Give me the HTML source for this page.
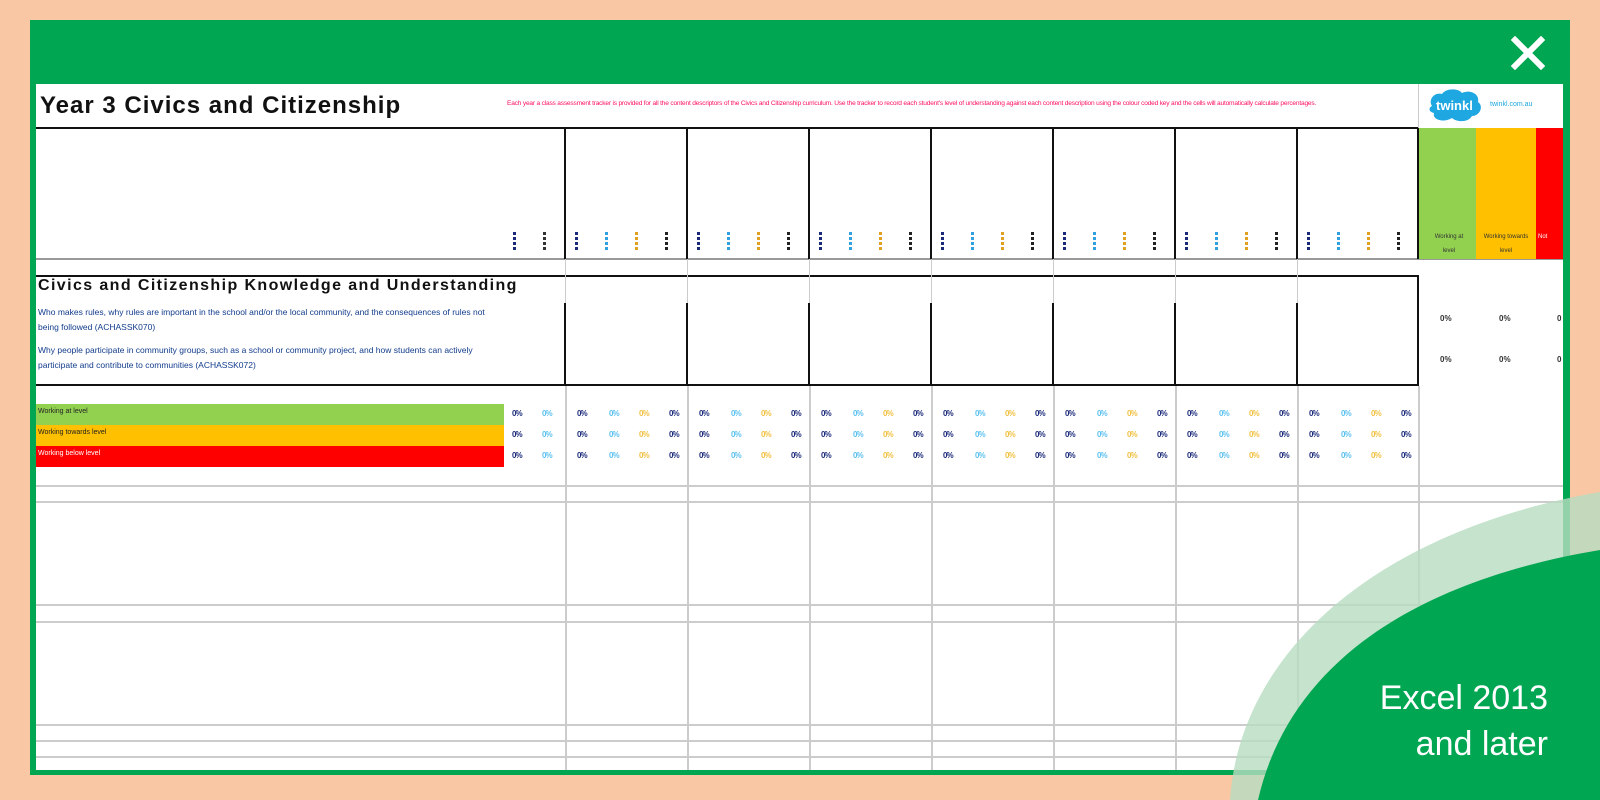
<!DOCTYPE html>
<html><head><meta charset="utf-8"><style>
*{margin:0;padding:0;box-sizing:border-box}
body{width:1600px;height:800px;background:#f9c7a3;position:relative;overflow:hidden;font-family:"Liberation Sans",sans-serif}
.a{position:absolute}
#frame{left:30px;top:20px;width:1540px;height:755px;background:#00a651}
#sheet{left:36px;top:84px;width:1527px;height:686px;background:#fff}
.h{position:absolute;height:1px}
.v{position:absolute;width:1px}
.m{position:absolute;font-size:8px;font-weight:bold;letter-spacing:-1px}
</style></head><body>
<div class="a" id="frame"></div>
<div class="a" id="sheet"></div>
<svg class="a" style="left:1511px;top:36px" width="34" height="34" viewBox="0 0 34 34"><path d="M4 4L30 30M30 4L4 30" stroke="#fff" stroke-width="6" stroke-linecap="square"/></svg>

<div class="a" style="left:40px;top:92px;font-size:24px;font-weight:bold;color:#111;letter-spacing:1px">Year 3 Civics and Citizenship</div>
<div class="a" style="left:507px;top:100px;font-size:6.6px;color:#ff1060;white-space:nowrap;letter-spacing:-0.2px">Each year a class assessment tracker is provided for all the content descriptors of the Civics and Citizenship curriculum. Use the tracker to record each student's level of understanding against each content description using the colour coded key and the cells will automatically calculate percentages.</div>
<svg class="a" style="left:1426px;top:86px" width="60" height="40" viewBox="0 0 60 40"><path d="M6 20C2 14 8 6 16 8C20 2 32 2 36 7C44 3 54 8 52 16C58 20 54 30 46 30C42 37 30 36 26 32C18 37 6 34 8 27C3 26 2 22 6 20Z" fill="#1ea7e1"/><text x="10" y="24" font-family="Liberation Sans" font-size="13" font-weight="bold" fill="#fff">twinkl</text></svg>
<div class="a" style="left:1490px;top:101px;font-size:7px;color:#1ea7e1;white-space:nowrap">twinkl.com.au</div>

<div class="h" style="left:36px;top:127px;width:1382px;height:2px;background:#111"></div>
<div class="h" style="left:36px;top:258px;width:1527px;height:2px;background:#999"></div>
<div class="v" style="left:1418px;top:84px;height:44px;background:#ccc"></div>
<div class="a" style="left:1418px;top:128px;width:58px;height:131px;background:#92d050"></div>
<div class="a" style="left:1476px;top:128px;width:60px;height:131px;background:#ffc000"></div>
<div class="a" style="left:1536px;top:128px;width:27px;height:131px;background:#ff0000"></div>
<div class="a" style="left:1425px;top:230px;font-size:6px;color:#333;line-height:14px;width:48px;text-align:center">Working at<br>level</div>
<div class="a" style="left:1478px;top:230px;font-size:6px;color:#333;line-height:14px;width:56px;text-align:center">Working towards<br>level</div>
<div class="a" style="left:1538px;top:230px;font-size:6px;color:#fff;line-height:14px">Not</div>

<div class="h" style="left:36px;top:275px;width:1383px;height:2px;background:#111"></div>
<div class="h" style="left:36px;top:384px;width:1383px;height:2px;background:#111"></div>
<div class="v" style="left:1417px;top:275px;height:111px;width:2px;background:#111"></div>
<div class="a" style="left:38px;top:277px;font-size:16px;font-weight:bold;color:#111;letter-spacing:1.4px">Civics and Citizenship Knowledge and Understanding</div>
<div class="a" style="left:38px;top:305px;width:465px;font-size:8.5px;line-height:15px;color:#123c8c">Who makes rules, why rules are important in the school and/or the local community, and the consequences of rules not being followed (ACHASSK070)</div>
<div class="a" style="left:38px;top:343px;width:465px;font-size:8.5px;line-height:15px;color:#123c8c">Why people participate in community groups, such as a school or community project, and how students can actively participate and contribute to communities (ACHASSK072)</div>
<div class="a" style="left:1440px;top:314px;font-size:8px;font-weight:bold;color:#333">0%</div>
<div class="a" style="left:1499px;top:314px;font-size:8px;font-weight:bold;color:#333">0%</div>
<div class="a" style="left:1557px;top:314px;font-size:8px;font-weight:bold;color:#333">0</div>
<div class="a" style="left:1440px;top:355px;font-size:8px;font-weight:bold;color:#333">0%</div>
<div class="a" style="left:1499px;top:355px;font-size:8px;font-weight:bold;color:#333">0%</div>
<div class="a" style="left:1557px;top:355px;font-size:8px;font-weight:bold;color:#333">0</div>

<div class="a" style="left:36px;top:404px;width:468px;height:21px;background:#92d050;font-size:7px;padding:4px 2px;color:#222">Working at level</div>
<div class="a" style="left:36px;top:425px;width:468px;height:21px;background:#ffc000;font-size:7px;padding:4px 2px;color:#222">Working towards level</div>
<div class="a" style="left:36px;top:446px;width:468px;height:21px;background:#ff0000;font-size:7px;padding:4px 2px;color:#fff">Working below level</div>

<div class="h" style="left:36px;top:485px;width:1527px;background:#ccc;height:2px"></div>
<div class="h" style="left:36px;top:501px;width:1527px;background:#ccc;height:2px"></div>
<div class="h" style="left:36px;top:604px;width:1527px;background:#ccc;height:2px"></div>
<div class="h" style="left:36px;top:621px;width:1527px;background:#ccc;height:2px"></div>
<div class="h" style="left:36px;top:724px;width:1527px;background:#ccc;height:2px"></div>
<div class="h" style="left:36px;top:740px;width:1527px;background:#ccc;height:2px"></div>
<div class="h" style="left:36px;top:756px;width:1527px;background:#ccc;height:2px"></div>
<div id="gen"></div>

<svg class="a" style="left:0;top:0" width="1600" height="800" viewBox="0 0 1600 800">
<path d="M1230 800C1240 650 1380 530 1600 492L1600 800Z" fill="#b7dcc0" fill-opacity="0.8"/>
<path d="M1258 800C1290 660 1420 580 1600 550L1600 800Z" fill="#00a651"/>
<text x="1548" y="709" text-anchor="end" font-family="Liberation Sans" font-size="34" fill="#fff">Excel 2013</text>
<text x="1548" y="755" text-anchor="end" font-family="Liberation Sans" font-size="34" fill="#fff">and later</text>
</svg>

<script>
var g=document.getElementById('gen'),h='';
var cols=[565,687,809,931,1053,1175,1297];
cols.forEach(function(x){
 h+='<div class="v" style="left:'+(x-1)+'px;top:128px;height:131px;width:2px;background:#111"></div>';
 h+='<div class="v" style="left:'+(x-1)+'px;top:303px;height:82px;width:2px;background:#111"></div>';
 h+='<div class="v" style="left:'+x+'px;top:259px;height:44px;background:#ccc"></div>';
 h+='<div class="v" style="left:'+x+'px;top:386px;height:384px;background:#ccc;width:2px"></div>';
});
h+='<div class="v" style="left:1417px;top:128px;height:131px;width:2px;background:#111"></div>';
h+='<div class="v" style="left:1418px;top:386px;height:384px;background:#ccc;width:2px"></div>';
var cl=['#1a2a7a','#30a0e0','#e0a020','#222'];
function vmark(x,c){return '<div class="a" style="left:'+x+'px;top:232px;width:3px;height:20px;background:repeating-linear-gradient('+c+' 0 3px,#fff 3px 5px)"></div>';}
h+=vmark(513,'#1a2a7a')+vmark(543,'#333');
cols.forEach(function(x){[10,40,70,100].forEach(function(o,i){h+=vmark(x+o,cl[i]);});});
var mc=['#1a2a7a','#5bc0f0','#f0c040','#1a2a7a'];
[409,430,451].forEach(function(y){
 h+='<div class="m" style="left:512px;top:'+y+'px;color:#1a2a7a">0%</div><div class="m" style="left:542px;top:'+y+'px;color:#5bc0f0">0%</div>';
 cols.forEach(function(x){[15,47,77,107].forEach(function(o,i){h+='<div class="m" style="left:'+(x+o-3)+'px;top:'+y+'px;color:'+mc[i]+'">0%</div>';});});
});
g.innerHTML=h;
</script>
</body></html>
